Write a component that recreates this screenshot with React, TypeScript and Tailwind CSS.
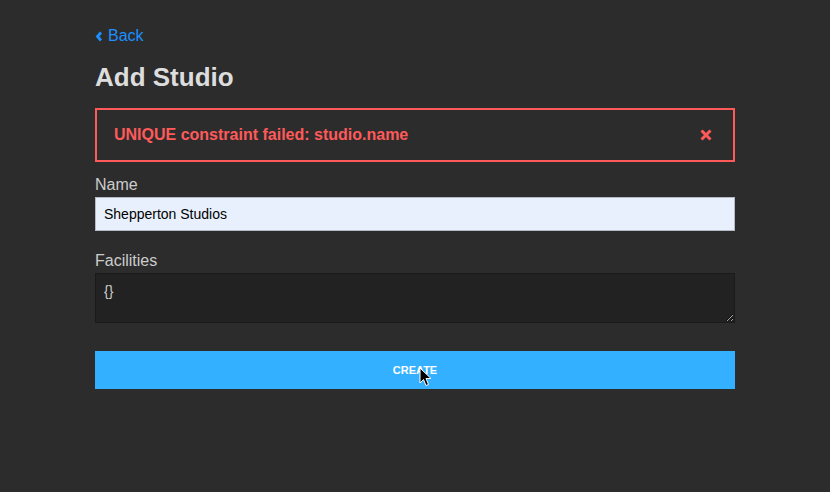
import React from "react";

export default function App() {
  return (
    <div className="w-[830px] h-[492px] bg-[#2c2c2c] relative" style={{ fontFamily: '"Liberation Sans", Arial, sans-serif' }}>
      <div className="w-[640px] ml-[95px] pt-[27px] flex flex-col">
        <a className="flex items-center gap-[5px] text-[16px] leading-[18px] text-[#1e90ff] h-[18px]">
          <svg width="8" height="11" viewBox="0 0 8 11"><path d="M6 1.5 L2.5 5.5 L6 9.5" stroke="#1e90ff" strokeWidth="2.8" fill="none" /></svg>
          <span>Back</span>
        </a>
        <h1 className="mt-[18px] text-[26px] leading-[28px] font-bold text-[#dddddd]">Add Studio</h1>
        <div className="mt-[17px] h-[54px] border-2 border-[#ff5a5a] flex items-center justify-between pl-[17px] pr-[21px]">
          <span className="text-[16px] font-bold text-[#ff5a5a]">UNIQUE constraint failed: studio.name</span>
          <svg width="12" height="12" viewBox="0 0 12 12"><path d="M1.5 1.5 L10.5 10.5 M10.5 1.5 L1.5 10.5" stroke="#ff5a5a" strokeWidth="3" /></svg>
        </div>
        <label className="mt-[14px] text-[16px] leading-[18px] text-[#cccccc]">Name</label>
        <input
          className="mt-[3px] h-[34px] bg-[#e8f0fe] border border-[#b4bac6] px-[8px] text-[14px] text-black outline-none"
          defaultValue="Shepperton Studios"
          style={{ fontFamily: '"Liberation Sans", Arial, sans-serif' }}
        />
        <label className="mt-[21px] text-[16px] leading-[18px] text-[#cccccc]">Facilities</label>
        <textarea
          className="mt-[3px] h-[50px] bg-[#222222] border border-[#1a1a1a] px-[8px] py-[8px] text-[14px] leading-[18px] text-[#cccccc] outline-none"
          defaultValue="{}"
          style={{ fontFamily: '"Liberation Sans", Arial, sans-serif' }}
        />
        <button className="mt-[28px] h-[38px] bg-[#33b0ff] text-white text-[11px] font-bold">CREATE</button>
      </div>
      <svg className="absolute left-[419px] top-[367px]" width="13" height="20" viewBox="0 0 13 20">
        <path d="M1 1 L1 16 L4.5 12.5 L7 18.5 L9.5 17.5 L7 11.5 L12 11.5 Z" fill="#000" stroke="#fff" strokeWidth="1" strokeLinejoin="round" />
      </svg>
    </div>
  );
}
